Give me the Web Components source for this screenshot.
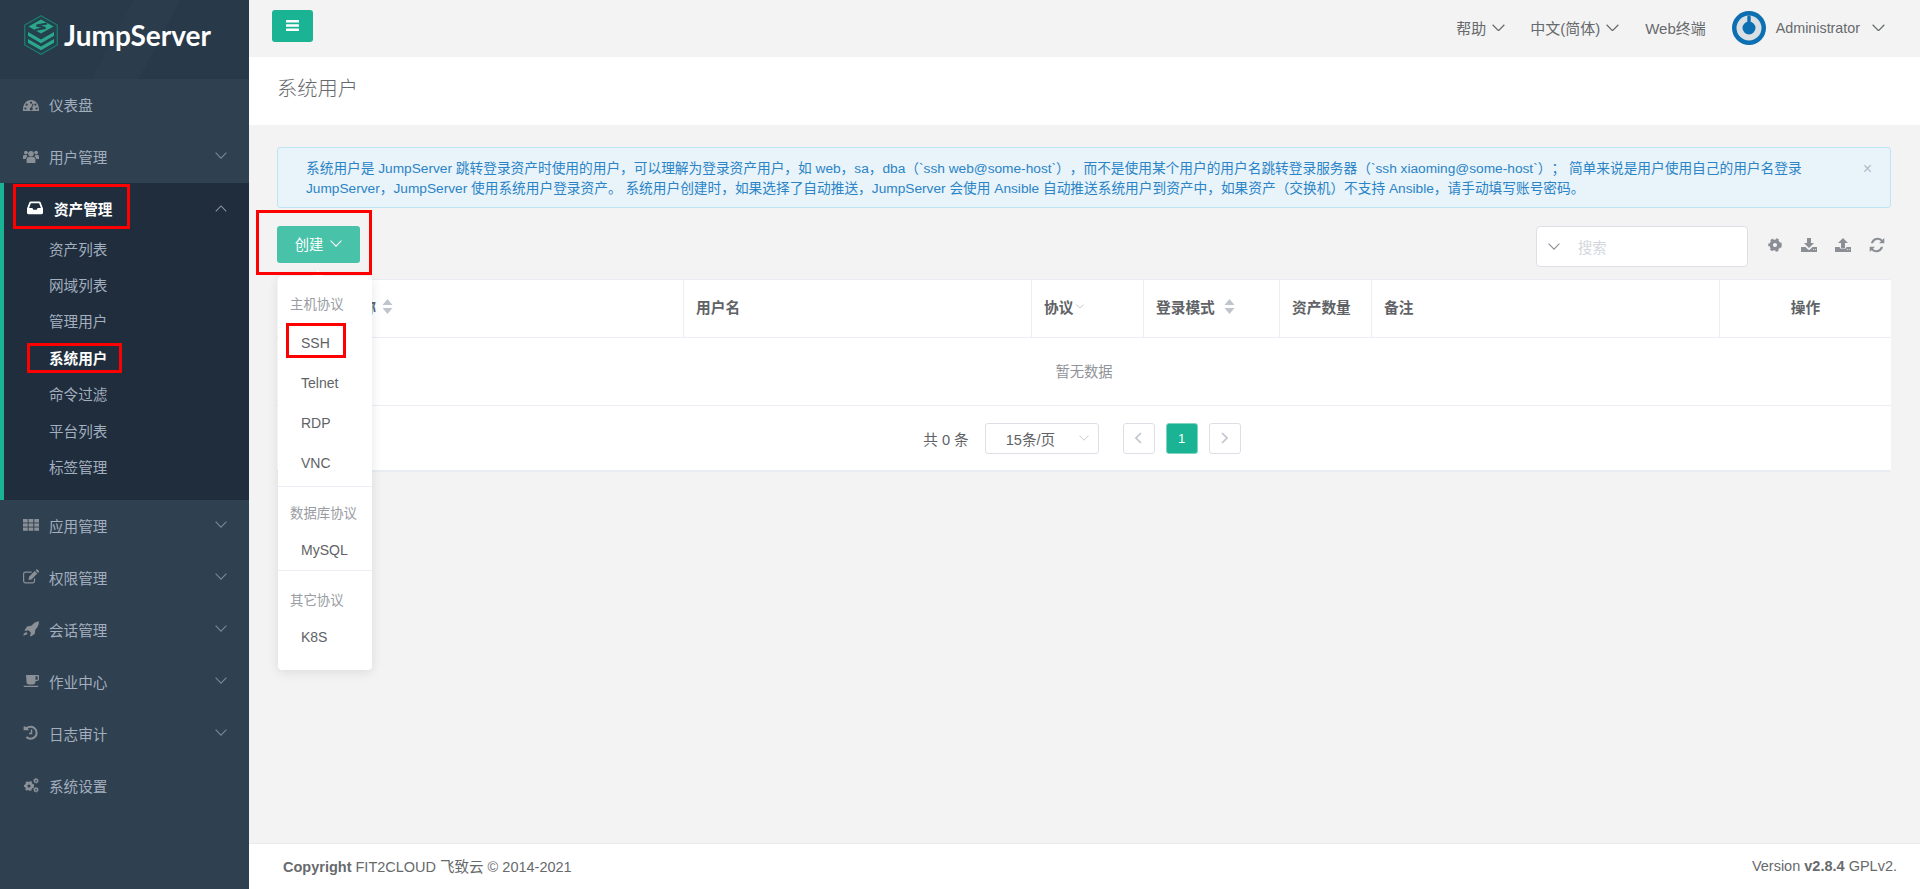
<!DOCTYPE html>
<html lang="zh-CN">
<head>
<meta charset="utf-8">
<title>系统用户</title>
<style>
    html, body { margin: 0; height: 100%; overflow: hidden; }
    body { font-family: "Liberation Sans", "Noto Sans CJK SC", sans-serif; font-size: 14.3px; color: #676a6c; background: #f3f3f4; text-spacing-trim: space-all; }
</style>
</head>
<body>
<js-app>
    <js-sidebar slot="sidebar">
        <nav-item icon="dashboard" label="仪表盘"></nav-item>
        <nav-item icon="users" label="用户管理" arrow></nav-item>
        <nav-item icon="inbox" label="资产管理" arrow active>
            <sub-item>资产列表</sub-item>
            <sub-item>网域列表</sub-item>
            <sub-item>管理用户</sub-item>
            <sub-item current>系统用户</sub-item>
            <sub-item>命令过滤</sub-item>
            <sub-item>平台列表</sub-item>
            <sub-item>标签管理</sub-item>
        </nav-item>
        <nav-item icon="apps" label="应用管理" arrow></nav-item>
        <nav-item icon="edit" label="权限管理" arrow></nav-item>
        <nav-item icon="rocket" label="会话管理" arrow></nav-item>
        <nav-item icon="coffee" label="作业中心" arrow></nav-item>
        <nav-item icon="history" label="日志审计" arrow></nav-item>
        <nav-item icon="cogs" label="系统设置"></nav-item>
    </js-sidebar>
    <js-topbar slot="main"></js-topbar>
    <js-heading slot="main">系统用户</js-heading>
    <js-content slot="main">
        <js-alert>
            <span>系统用户是 JumpServer 跳转登录资产时使用的用户，可以理解为登录资产用户，如 web，sa，dba（`ssh web@some-host`），而不是使用某个用户的用户名跳转登录服务器（`ssh xiaoming@some-host`）； 简单来说是用户使用自己的用户名登录</span>
            <span>JumpServer，JumpServer 使用系统用户登录资产。 系统用户创建时，如果选择了自动推送，JumpServer 会使用 Ansible 自动推送系统用户到资产中，如果资产（交换机）不支持 Ansible，请手动填写账号密码。</span>
        </js-alert>
        <js-toolbar></js-toolbar>
        <js-table></js-table>
    </js-content>
    <js-footer slot="main"></js-footer>
    <create-menu slot="overlay"></create-menu>
    <red-mark slot="overlay" style="left:13px;top:184px;width:117px;height:45px"></red-mark>
    <red-mark slot="overlay" style="left:27px;top:343px;width:95px;height:30px"></red-mark>
    <red-mark slot="overlay" style="left:256px;top:210px;width:116px;height:65px"></red-mark>
    <red-mark slot="overlay" style="left:286px;top:323px;width:60px;height:35px"></red-mark>
</js-app>

<script>
const chevronDown = (size, color) => `<svg width="${size}" height="${size * 0.6}" viewBox="0 0 10 6" fill="none" stroke="${color}" stroke-width="0.9"><path d="M0.5 0.6 5 5.2 9.5 0.6"/></svg>`;

function gear(cx, cy, r) {
    const teeth = 2 * Math.PI * r * 1.25 / 16;
    return `<circle cx="${cx}" cy="${cy}" r="${r * 0.68}" fill="none" stroke="currentColor" stroke-width="${r * 0.62}"/>`
        + `<circle cx="${cx}" cy="${cy}" r="${r * 1.03}" fill="none" stroke="currentColor" stroke-width="${r * 0.36}" stroke-dasharray="${teeth} ${teeth}"/>`;
}

// roughly the font-awesome 4 set the original sidebar uses
const ICONS = {
    dashboard: `<path fill="currentColor" fill-rule="evenodd" d="M0 12.5C0 7 3.4 3 8 3s8 4 8 9.5V14H0zM8 4.6a1.1 1.1 0 1 0 0 2.2 1.1 1.1 0 0 0 0-2.2zM3.7 6.6a1.1 1.1 0 1 0 0 2.2 1.1 1.1 0 0 0 0-2.2zM12.3 6.6a1.1 1.1 0 1 0 0 2.2 1.1 1.1 0 0 0 0-2.2zM2.4 10.4a1.1 1.1 0 1 0 0 2.2 1.1 1.1 0 0 0 0-2.2zM13.6 10.4a1.1 1.1 0 1 0 0 2.2 1.1 1.1 0 0 0 0-2.2zM9.6 6.6 8.2 10.4a1.5 1.5 0 1 0 1 .3l1.3-3.8z"/>`,
    users: `<g fill="currentColor"><circle cx="8" cy="4.8" r="2.8"/><circle cx="2.9" cy="3.6" r="1.9"/><circle cx="13.1" cy="3.6" r="1.9"/><path d="M3.6 14V10.2C3.6 8.6 5 7.9 5.8 7.9h4.4c.8 0 2.2.7 2.2 2.3V14z"/><path d="M0 10V7.3C0 6.3.9 5.9 1.5 5.9h2.1c.2.7.6 1.3 1.1 1.7-1.2.4-1.9 1.4-2 2.4zM16 10V7.3c0-1-.9-1.4-1.5-1.4h-2.1c-.2.7-.6 1.3-1.1 1.7 1.2.4 1.9 1.4 2 2.4z"/></g>`,
    inbox: `<path fill="currentColor" fill-rule="evenodd" d="M3.6 1.5h8.8c.6 0 1.1.4 1.3.9L16 8.5v4.3c0 .8-.6 1.4-1.4 1.4H1.4C.6 14.2 0 13.6 0 12.8V8.5l2.3-6.1c.2-.5.7-.9 1.3-.9zM3.9 3.3 2.1 8h3.3l.9 1.8h3.4l.9-1.8h3.3l-1.8-4.7z"/>`,
    apps: `<g fill="currentColor"><rect x="0" y="2" width="4.7" height="3.5"/><rect x="5.6" y="2" width="4.7" height="3.5"/><rect x="11.3" y="2" width="4.7" height="3.5"/><rect x="0" y="6.4" width="4.7" height="3.2"/><rect x="5.6" y="6.4" width="4.7" height="3.2"/><rect x="11.3" y="6.4" width="4.7" height="3.2"/><rect x="0" y="10.5" width="4.7" height="3.3"/><rect x="5.6" y="10.5" width="4.7" height="3.3"/><rect x="11.3" y="10.5" width="4.7" height="3.3"/></g>`,
    edit: `<path fill="none" stroke="currentColor" stroke-width="1.2" d="M11.5 9.5v2.6c0 1-.8 1.7-1.7 1.7H2.4c-1 0-1.8-.8-1.8-1.7V5c0-1 .8-1.8 1.8-1.8h6.3"/><path fill="currentColor" d="M6 7.8 11.7 2l2.6 2.6L8.500 10.400 5.500 11zM12.500 1.300l.9-.9c.3-.3.7-.3 1 0l1.600 1.600c.3.300.3.700 0 1l-.9.900z"/>`,
    rocket: `<path fill="currentColor" d="M16 .3c-.1 3.200-1 6-3.700 8.500l-.6 4.300-3.800 2.400-.9-.7.900-3-2.600-2.600-3 .9-.7-.9 2.400-3.800 4.300-.6C10.900 2 12.800 .6 16 .3zM3.300 11.300c.6.100 1.100.6 1.300 1.300-.8 1.100-2.300 1.700-4.300 2 .2-1.800.8-2.500 3-3.300z"/>`,
    coffee: `<path fill="currentColor" fill-rule="evenodd" d="M3 2h12c.6 0 1 .4 1 1v3c0 1.100-.9 2-2 2h-1.500v.8c0 1.500-1.200 2.700-2.700 2.700H6.200a2.700 2.700 0 0 1-2.700-2.700zM12.500 3.200v3.600h1.300c.5 0 .9-.4.900-.9V4.100c0-.5-.4-.9-.9-.9zM.4 12.800h15.200c-.2.800-.8 1.200-1.500 1.200H1.900c-.7 0-1.300-.4-1.500-1.200z"/>`,
    history: `<path fill="none" stroke="currentColor" stroke-width="2" d="M3.600 3.300A6 6 0 1 1 3.400 12"/><path fill="currentColor" d="M.6 1.500h2.100l3.200 3.200-.5.500H.6z"/><path fill="none" stroke="currentColor" stroke-width="1.500" d="M8.500 4.500v4H6"/>`,
    cogs: gear(6, 9, 4.2) + gear(13, 3.800, 2.300) + gear(13, 12.800, 2.300),
    gear: gear(8, 8, 5.600),
    download: `<path fill="currentColor" fill-rule="evenodd" d="M6 1h4v5h3L8 11 3 6h3zM0 10h4.500L7 12.500c.6.600 1.400.600 2 0L11.500 10H16v5H0zM12 12.200v.8h1v-.8zM14 12.200v.8h1v-.8z"/>`,
    upload: `<path fill="currentColor" fill-rule="evenodd" d="M8 1l5 5h-3v5H6V6H3zM0 10h4.800v1.500h6.400V10H16v5H0zM12 12.200v.8h1v-.8zM14 12.200v.8h1v-.8z"/>`,
    refresh: `<path fill="currentColor" d="M15.300 1v5.200h-5.200L12 4.300A4.700 4.700 0 0 0 4.100 6.200H1.900A6.800 6.800 0 0 1 13.500 2.800zM.7 15V9.800h5.200L4 11.700A4.700 4.700 0 0 0 11.900 9.800h2.200A6.800 6.800 0 0 1 2.500 13.200z"/>`
};

class JsApp extends HTMLElement {
    constructor() {
        super();
        this.attachShadow({ mode: 'open' }).innerHTML = `
            <style>
                :host { display: flex; height: 889px; position: relative; overflow: hidden; }
                .side { flex: 0 0 249px; }
                .main { flex: 1; display: flex; flex-direction: column; min-width: 0; }
            </style>
            <div class="side"><slot name="sidebar"></slot></div>
            <div class="main"><slot name="main"></slot></div>
            <slot name="overlay"></slot>`;
    }
}

class JsSidebar extends HTMLElement {
    constructor() {
        super();
        this.attachShadow({ mode: 'open' }).innerHTML = `
            <style>
                :host { display: block; height: 889px; background: #2f4050; }
                .logo { height: 79px; display: flex; align-items: center; box-sizing: border-box; padding: 0 0 9px 24px; gap: 6px;
                    background: linear-gradient(118deg, #293a4a 0 46%, #2b3c4c 46% 62%, #283949 62%); }
                .name { font: 700 28px Lato, "Liberation Sans", sans-serif; color: #fff; letter-spacing: 0; }
                svg { display: block; }
            </style>
            <div class="logo">
                <svg width="34" height="40" viewBox="0 0 34 40">
                    <path d="M17 .7 33.300 10v20L17 39.300 .7 30V10z" fill="#24424e" stroke="#1c7d70" stroke-width="1.200"/>
                    <path d="M17 4.500 29.500 11.500 17 18.500 4.500 11.500z" fill="#2ba88c"/>
                    <path d="M23 8.500 12.500 10.500 21.500 13 11 15" fill="none" stroke="#24424e" stroke-width="2"/>
                    <path d="M4 17l13 7.500L30 17v3.800L17 28.300 4 20.800z" fill="#2ba88c"/>
                    <path d="M4 24l13 7.500L30 24v3.800L17 35.300 4 27.800z" fill="#2ba88c"/>
                </svg>
                <span class="name">JumpServer</span>
            </div>
            <slot></slot>`;
    }
}

class NavItem extends HTMLElement {
    constructor() {
        super();
        const active = this.hasAttribute('active');
        const arrow = active
            ? `<svg width="12" height="7" viewBox="0 0 10 6" fill="none" stroke="#8c95a0" stroke-width="0.9"><path d="M0.500 5.400 5 .8l4.500 4.600"/></svg>`
            : chevronDown(12, '#7c8894');
        this.attachShadow({ mode: 'open' }).innerHTML = `
            <style>
                :host { display: block; }
                :host([active]) { background: #1f2d3d; border-left: 4px solid #1ab394; padding-bottom: 15px; }
                .row { display: flex; align-items: center; height: 52px; box-sizing: border-box; padding: 0 22px 1px 23px; color: #a3aebe; font-size: 14.600px; }
                :host([active]) .row { height: 48px; padding: 2px 22px 0 23px; color: #fff; font-weight: 600; }
                .icon { flex: 0 0 16px; height: 16px; margin-right: 10px; color: #8b9097; }
                :host([active]) .icon { color: #fff; margin-right: 11px; }
                .label { flex: 1; }
                svg { display: block; }
                .arrow { margin-top: -1px; }
                :host([active]) .arrow { margin-top: 0; }
                :host([active]) .sub { margin-top: -1px; }
            </style>
            <div class="row">
                <svg class="icon" viewBox="0 0 16 16">${ICONS[this.getAttribute('icon')] || ''}</svg>
                <span class="label">${this.getAttribute('label') || ''}</span>
                ${this.hasAttribute('arrow') ? `<span class="arrow">${arrow}</span>` : ''}
            </div>
            <div class="sub"><slot></slot></div>`;
    }
}

class SubItem extends HTMLElement {
    constructor() {
        super();
        this.attachShadow({ mode: 'open' }).innerHTML = `
            <style>
                :host { display: flex; align-items: center; height: 36.400px; padding-left: 45px; color: #a3aebe; font-size: 14.600px; }
                :host([current]) { color: #fff; font-weight: 600; }
            </style>
            <slot></slot>`;
    }
}

class JsTopbar extends HTMLElement {
    constructor() {
        super();
        const caret = chevronDown(13, '#676a6c');
        this.attachShadow({ mode: 'open' }).innerHTML = `
            <style>
                :host { display: flex; align-items: center; height: 57px; flex: none; box-sizing: border-box; padding: 0 35px 2px 23px; }
                button { width: 41px; height: 32px; background: #1ab394; border: 0; border-radius: 3px; padding: 0; display: grid; place-items: center; margin-top: -4px; }
                .right { margin-left: auto; display: flex; align-items: center; font-size: 15px; }
                .item { display: flex; align-items: center; gap: 6px; white-space: nowrap; }
                svg { display: block; }
                .avatar { margin: 0 10px 0 26px; }
            </style>
            <button aria-label="menu"><svg width="13" height="11" viewBox="0 0 13 11" fill="#fff"><rect width="13" height="2.400" rx=".5"/><rect y="4.300" width="13" height="2.400" rx=".5"/><rect y="8.600" width="13" height="2.400" rx=".5"/></svg></button>
            <div class="right">
                <span class="item" style="margin-right:25px">帮助 ${caret}</span>
                <span class="item" style="margin-right:26px">中文(简体) ${caret}</span>
                <span class="item">Web终端</span>
                <svg class="avatar" width="34" height="34" viewBox="0 0 34 34">
                    <circle cx="17" cy="17" r="17" fill="#0b6fb2"/>
                    <circle cx="17" cy="17" r="9.500" fill="none" stroke="#d9dfe3" stroke-width="6"/>
                    <path d="M17 6v11" stroke="#0b6fb2" stroke-width="3.400" stroke-linecap="round"/>
                </svg>
                <span class="item" style="gap:12px;font-size:14.300px">Administrator ${caret}</span>
            </div>`;
    }
}

class JsHeading extends HTMLElement {
    constructor() {
        super();
        this.attachShadow({ mode: 'open' }).innerHTML = `
            <style>
                :host { display: flex; align-items: center; flex: none; height: 68px; padding: 0 28px 9px; box-sizing: border-box; background: #fff; font-size: 20.300px; font-weight: 300; color: #676a6c; }
            </style>
            <slot></slot>`;
    }
}

class JsContent extends HTMLElement {
    constructor() {
        super();
        this.attachShadow({ mode: 'open' }).innerHTML = `
            <style>
                :host { display: flex; flex-direction: column; flex: 1; min-height: 0; padding: 22px 29px 0 28px; }
            </style>
            <slot></slot>`;
    }
}

class JsAlert extends HTMLElement {
    constructor() {
        super();
        this.attachShadow({ mode: 'open' }).innerHTML = `
            <style>
                :host { display: block; position: relative; box-sizing: border-box; height: 61px; padding: 11px 60px 0 28px; background: #e8f3fa; border: 1px solid #bde6f2; border-radius: 3px; color: #2a84c6; font-size: 13.700px; line-height: 20px; }
                ::slotted(span) { display: block; white-space: nowrap; }
                .close { position: absolute; right: 18px; top: 13px; color: #b4bcc6; font-size: 16px; line-height: 16px; }
            </style>
            <slot></slot>
            <span class="close">×</span>`;
    }
}

class JsToolbar extends HTMLElement {
    constructor() {
        super();
        const tool = name => `<svg width="16" height="16" viewBox="0 0 16 16" style="color:#8b8f95">${ICONS[name]}</svg>`;
        this.attachShadow({ mode: 'open' }).innerHTML = `
            <style>
                :host { display: flex; flex: none; align-items: flex-start; height: 53px; margin-top: 18px; }
                .create { width: 83px; height: 37px; background: #48c2a9; border: 0; border-radius: 3px; color: #fff; font: inherit; font-size: 14.300px; display: flex; align-items: center; justify-content: center; gap: 7px; padding: 0 0 2px; }
                .search { margin-left: auto; width: 212px; height: 41px; box-sizing: border-box; background: #fff; border: 1px solid #dcdfe6; border-radius: 4px; display: flex; align-items: center; padding-left: 11px; gap: 18px; color: #d3d6dc; font-size: 14.300px; }
                .tools { display: flex; gap: 18px; margin: 11px 6px 0 19px; }
                svg { display: block; }
            </style>
            <button class="create">创建 ${chevronDown(12, '#fff')}</button>
            <div class="search">${chevronDown(12, '#8b8f95')}<span>搜索</span></div>
            <div class="tools">${tool('gear')}${tool('download')}${tool('upload')}${tool('refresh')}</div>`;
    }
}

class JsTable extends HTMLElement {
    constructor() {
        super();
        const sort = `<svg class="sort" width="11" height="15" viewBox="0 0 11 15" fill="#c0c4cc"><path d="M5.500 0 10.500 6H.5zM5.500 15 .5 9h10z"/></svg>`;
        this.attachShadow({ mode: 'open' }).innerHTML = `
            <style>
                :host { display: block; background: #fff; border: 0 solid #e9ecf3; border-width: 1px 0 2px; border-radius: 2px; color: #606266; }
                .head { display: grid; grid-template-columns: 407px 348px 112px 136px 92px 348px 1fr; height: 57px; border-bottom: 1px solid #ebeef5; box-sizing: content-box; }
                .head > div { display: flex; align-items: center; gap: 7px; padding: 0 0 5px 12px; border-right: 1px solid #ebeef5; font-weight: 700; font-size: 14.700px; box-sizing: border-box; white-space: nowrap; }
                .head > div:last-child { border-right: 0; padding-left: 0; justify-content: center; }
                .head .first { justify-content: flex-end; padding-right: 290px; gap: 4px; }
                svg { display: block; }
                .sort { margin-left: 2px; }
                .empty { height: 68px; box-sizing: border-box; padding-bottom: 3px; border-bottom: 1px solid #ebeef5; display: grid; place-items: center; color: #909399; font-size: 14.300px; }
                .pager { height: 64px; display: flex; align-items: center; justify-content: center; gap: 0; font-size: 14.600px; padding-right: 4px; }
                .size { width: 114px; height: 31px; box-sizing: border-box; margin: 0 24px 0 16px; border: 1px solid #dcdfe6; border-radius: 3px; display: flex; align-items: center; justify-content: space-between; padding: 0 9px 0 20px; }
                .page { width: 32px; height: 31px; box-sizing: border-box; border: 1px solid #dcdfe6; border-radius: 3px; display: grid; place-items: center; margin-right: 11px; color: #c0c4cc; }
                .page.on { background: #1ab394; border-color: #7fd3c1; color: #fff; font-size: 13px; }
                .page:last-child { margin-right: 0; }
            </style>
            <div class="head">
                <div class="first">名称${sort}</div>
                <div>用户名</div>
                <div style="gap:3px">协议 ${chevronDown(8, '#b0b4bb')}</div>
                <div>登录模式${sort}</div>
                <div>资产数量</div>
                <div>备注</div>
                <div>操作</div>
            </div>
            <div class="empty">暂无数据</div>
            <div class="pager">
                <span>共 0 条</span>
                <div class="size">15条/页 ${chevronDown(10, '#c0c4cc')}</div>
                <div class="page"><svg width="7" height="12" viewBox="0 0 7 12" fill="none" stroke="#c0c4cc" stroke-width="1.600"><path d="M6 1 1 6l5 5"/></svg></div>
                <div class="page on">1</div>
                <div class="page"><svg width="7" height="12" viewBox="0 0 7 12" fill="none" stroke="#c0c4cc" stroke-width="1.600"><path d="M1 1l5 5-5 5"/></svg></div>
            </div>`;
    }
}

class JsFooter extends HTMLElement {
    constructor() {
        super();
        this.attachShadow({ mode: 'open' }).innerHTML = `
            <style>
                :host { display: flex; flex: none; align-items: center; justify-content: space-between; height: 46px; box-sizing: border-box; padding: 0 23px 2px 34px; background: #fff; border-top: 1px solid #e7eaec; font-size: 14.500px; color: #676a6c; }
            </style>
            <span><b>Copyright</b> FIT2CLOUD 飞致云 © 2014-2021</span>
            <span>Version <b>v2.8.4</b> GPLv2.</span>`;
    }
}

class CreateMenu extends HTMLElement {
    constructor() {
        super();
        this.attachShadow({ mode: 'open' }).innerHTML = `
            <style>
                :host { position: absolute; left: 278px; top: 276px; width: 94px; height: 394px; box-sizing: border-box; background: #fff; border-radius: 4px; box-shadow: 0 2px 12px rgba(0,0,0,.1); font-size: 14px; }
                :host::before { content: ""; position: absolute; left: 36px; top: -4px; width: 8px; height: 8px; background: #fff; transform: rotate(45deg); }
                .group { box-sizing: border-box; padding-left: 12px; color: #999ca3; font-size: 13.400px; display: flex; align-items: center; white-space: nowrap; height: 36px; }
                .item { height: 40px; display: flex; align-items: center; padding-left: 23px; color: #606266; }
                .line { border-top: 1px solid #ebeef5; }
                .first { height: 54px; padding-top: 0; }
            </style>
            <div class="group first">主机协议</div>
            <div class="item" style="margin-top:-7px">SSH</div>
            <div class="item">Telnet</div>
            <div class="item">RDP</div>
            <div class="item">VNC</div>
            <div class="line" style="margin-top:3px"></div>
            <div class="group" style="margin-top:7px">数据库协议</div>
            <div class="item">MySQL</div>
            <div class="line"></div>
            <div class="group" style="margin-top:10px">其它协议</div>
            <div class="item">K8S</div>`;
    }
}

class RedMark extends HTMLElement {
    constructor() {
        super();
        this.attachShadow({ mode: 'open' }).innerHTML = `
            <style>
                :host { position: absolute; box-sizing: border-box; border: 3px solid #f00; pointer-events: none; }
            </style>`;
    }
}

customElements.define('js-app', JsApp);
customElements.define('js-sidebar', JsSidebar);
customElements.define('nav-item', NavItem);
customElements.define('sub-item', SubItem);
customElements.define('js-topbar', JsTopbar);
customElements.define('js-heading', JsHeading);
customElements.define('js-content', JsContent);
customElements.define('js-alert', JsAlert);
customElements.define('js-toolbar', JsToolbar);
customElements.define('js-table', JsTable);
customElements.define('js-footer', JsFooter);
customElements.define('create-menu', CreateMenu);
customElements.define('red-mark', RedMark);
</script>
</body>
</html>
